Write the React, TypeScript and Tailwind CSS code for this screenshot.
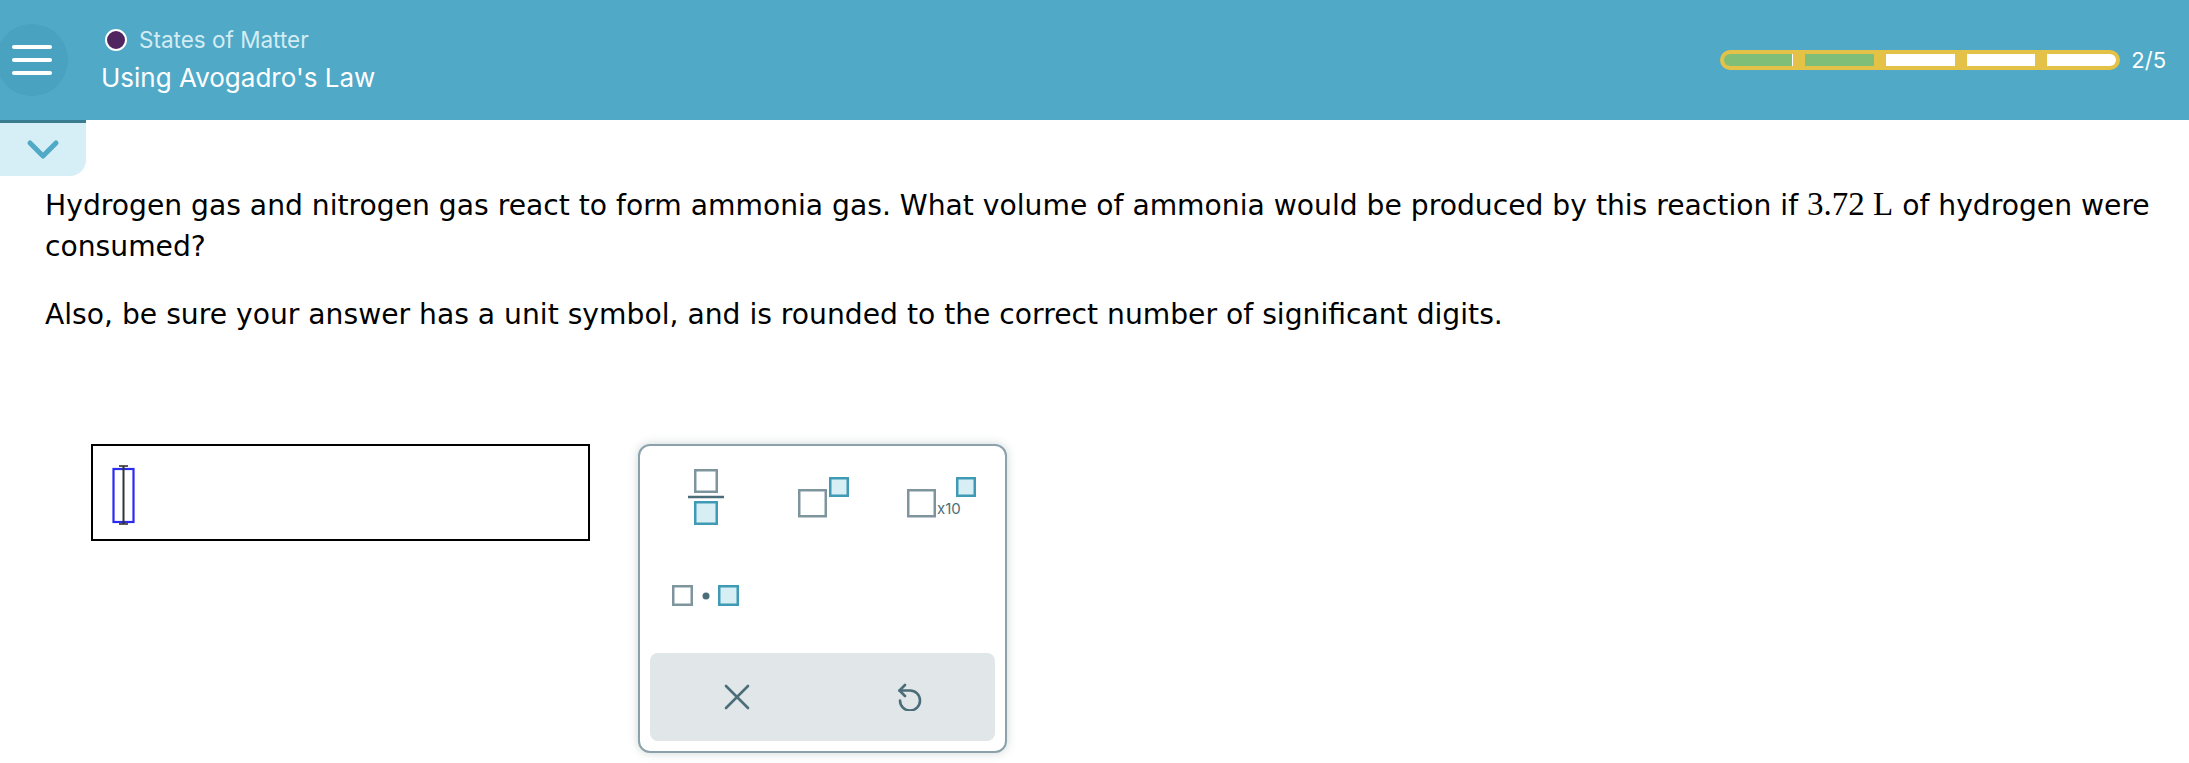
import React from 'react';

const Segment: React.FC<{ done?: boolean; first?: boolean; last?: boolean; marker?: boolean }> = ({ done, first, last, marker }) => (
    <div
        className={`relative h-[12px] w-[69px] ${done ? 'bg-[#7fbe79]' : 'bg-white'} ${first ? 'rounded-l-full' : ''} ${last ? 'rounded-r-full' : ''}`}
    >
        {marker && <div className="absolute right-0 top-0 h-full w-px bg-white" />}
    </div>
);

const ProgressBar: React.FC = () => (
    <div className="flex items-center gap-[11px]">
        <div className="flex h-[20px] w-[400px] items-center gap-[12px] rounded-full bg-[#e3c247] px-[4px]">
            <Segment done first marker />
            <Segment done />
            <Segment />
            <Segment />
            <Segment last />
        </div>
        <span className="text-[22px] text-white">2/5</span>
    </div>
);

const gray = '#7e959e';
const teal = '#3f9bb5';
const tealFill = '#d6eef4';
const ink = '#4b6d79';

const FractionIcon = () => (
    <svg width="36" height="56" viewBox="0 0 36 56">
        <rect x="7.25" y="1.25" width="21.5" height="21.5" fill="white" stroke={gray} strokeWidth="2.5" />
        <line x1="0" y1="28" x2="36" y2="28" stroke={ink} strokeWidth="2.5" />
        <rect x="7.25" y="33.25" width="21.5" height="21.5" fill={tealFill} stroke={teal} strokeWidth="2.5" />
    </svg>
);

const PowerIcon = () => (
    <svg width="52" height="41" viewBox="0 0 52 41">
        <rect x="1.25" y="13.25" width="26.5" height="26" fill="white" stroke={gray} strokeWidth="2.5" />
        <rect x="32.25" y="1.25" width="17.5" height="17.5" fill={tealFill} stroke={teal} strokeWidth="2.5" />
    </svg>
);

const SciIcon = () => (
    <svg width="70" height="41" viewBox="0 0 70 41">
        <rect x="1.25" y="13.25" width="26.5" height="26" fill="white" stroke={gray} strokeWidth="2.5" />
        <text x="30" y="37" fontSize="15" fill={ink} fontFamily="Inter, sans-serif">x10</text>
        <rect x="50.25" y="1.25" width="17.5" height="17.5" fill={tealFill} stroke={teal} strokeWidth="2.5" />
    </svg>
);

const DotIcon = () => (
    <svg width="68" height="22" viewBox="0 0 68 22">
        <rect x="1.25" y="1.25" width="18.5" height="18.5" fill="white" stroke={gray} strokeWidth="2.5" />
        <circle cx="34" cy="11" r="3.5" fill={ink} />
        <rect x="47.25" y="1.25" width="18.5" height="18.5" fill={tealFill} stroke={teal} strokeWidth="2.5" />
    </svg>
);

const ClearIcon = () => (
    <svg width="26" height="26" viewBox="0 0 26 26" fill="none" stroke={ink} strokeWidth="2.6" strokeLinecap="round">
        <path d="M2 2L24 24M24 2L2 24" />
    </svg>
);

const UndoIcon = () => (
    <svg width="26" height="28" viewBox="0 0 26 28" fill="none" stroke={ink} strokeWidth="2.6" strokeLinecap="round" strokeLinejoin="round">
        <path d="M7 2L1.5 7.5L7 13" />
        <path d="M1.5 7.5H12A10 10 0 1 1 2 17.5" />
    </svg>
);

const Cursor = () => (
    <svg width="24" height="60" viewBox="0 0 24 60">
        <rect x="1.5" y="4" width="20" height="53" fill="none" stroke="#2b2bf2" strokeWidth="2.2" />
        <line x1="11.5" y1="1" x2="11.5" y2="59" stroke="#333" strokeWidth="2" />
        <line x1="7" y1="1" x2="16" y2="1" stroke="#333" strokeWidth="1.6" />
        <line x1="7" y1="59" x2="16" y2="59" stroke="#333" strokeWidth="1.6" />
    </svg>
);

export default function App() {
    return (
        <div className="min-h-screen bg-white" style={{ fontFamily: 'Inter, sans-serif' }}>
            {/* Top bar */}
            <header className="flex h-[120px] items-center justify-between bg-[#4fa9c7] pr-[23px]">
                <div className="flex items-center">
                    <button className="-ml-[4px] flex h-[72px] w-[72px] flex-col items-center justify-center gap-[9px] rounded-full bg-[#49a2bf]">
                        <span className="block h-[4px] w-[40px] rounded-full bg-white" />
                        <span className="block h-[4px] w-[40px] rounded-full bg-white" />
                        <span className="block h-[4px] w-[40px] rounded-full bg-white" />
                    </button>
                    <div className="ml-[33px] flex flex-col gap-[8px]">
                        <div className="flex h-[28px] items-center gap-[12px] pl-[4px]">
                            <span className="block h-[22px] w-[22px] rounded-full border-2 border-white bg-[#4f2660]" />
                            <span className="text-[22.5px] text-[#d3ecf3]">States of Matter</span>
                        </div>
                        <div className="h-[32px] text-[26px] leading-[32px] text-white">Using Avogadro's Law</div>
                    </div>
                </div>
                <ProgressBar />
            </header>

            {/* Collapse tab */}
            <div className="flex h-[56px] w-[86px] items-center justify-center rounded-br-[16px] border-t-[3px] border-[#3a7c90] bg-[#d6eef5]">
                <svg width="34" height="22" viewBox="0 0 34 22" fill="none" stroke="#4fa9c7" strokeWidth="5" strokeLinecap="round" strokeLinejoin="round">
                    <path d="M4 4L17 17L30 4" />
                </svg>
            </div>

            {/* Question */}
            <main className="mt-[10px] pl-[45px] pr-[20px] text-[28.2px] leading-[40.5px] text-black" style={{ fontFamily: '"DejaVu Sans", Verdana, sans-serif' }}>
                <p>
                    Hydrogen gas and nitrogen gas react to form ammonia gas. What volume of ammonia would be produced by this reaction if{' '}
                    <span className="text-[33px] leading-none" style={{ fontFamily: '"Liberation Serif", serif' }}>3.72 L</span> of hydrogen were consumed?
                </p>
                <p className="mt-[28px]">
                    Also, be sure your answer has a unit symbol, and is rounded to the correct number of significant digits.
                </p>

                {/* Answer area */}
                <div className="mt-[108px] flex items-start gap-[48px] pl-[46px]">
                    <div className="h-[97px] w-[499px] border-2 border-black pl-[19px] pt-[19px]">
                        <Cursor />
                    </div>

                    <div className="flex h-[309px] w-[369px] flex-col rounded-[12px] border-2 border-[#8ca1aa] bg-white px-[10px] pb-[10px] pt-[2px] shadow-[0_0_10px_rgba(60,90,100,0.25)]">
                        <div className="grid grid-cols-[118px_118px_118px] grid-rows-[99px_99px] -mx-[3px]">
                            <div className="flex items-center justify-center"><FractionIcon /></div>
                            <div className="flex items-center justify-center"><PowerIcon /></div>
                            <div className="flex items-center justify-center"><SciIcon /></div>
                            <div className="flex items-center justify-center"><DotIcon /></div>
                        </div>
                        <div className="mt-[7px] grid h-[88px] grid-cols-2 items-center rounded-[8px] bg-[#e1e6e9]">
                            <div className="flex justify-center pl-[2px]"><ClearIcon /></div>
                            <div className="flex justify-center pl-[4px]"><UndoIcon /></div>
                        </div>
                    </div>
                </div>
            </main>
        </div>
    );
}
